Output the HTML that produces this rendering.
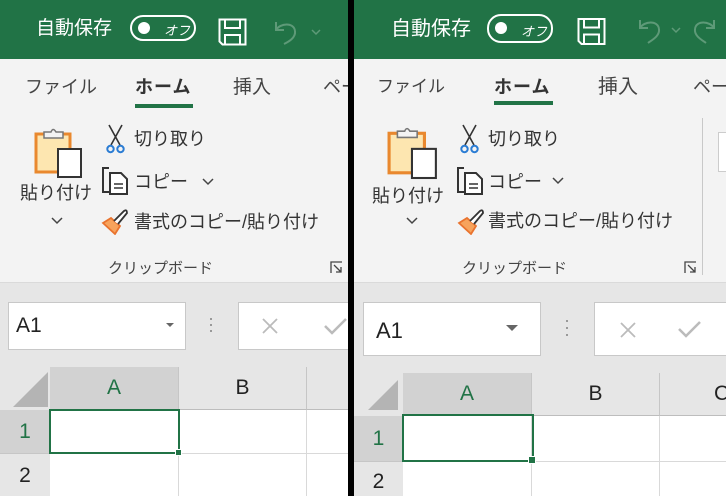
<!DOCTYPE html>
<html><head><meta charset="utf-8">
<style>
*{margin:0;padding:0;box-sizing:border-box}
body{width:726px;height:496px;overflow:hidden;background:#000;position:relative;font-family:"Liberation Sans","Noto Sans CJK JP",sans-serif}
.p{position:absolute;top:0;height:496px;overflow:hidden;background:#e6e6e6}
.a{position:absolute;white-space:nowrap}
.hdr{position:absolute;left:0;right:0;top:0;height:59px;background:#217346}
.rib{position:absolute;left:0;right:0;top:59px;height:224px;background:#f3f3f3;border-bottom:1px solid #dadada}
.t{color:#fff;font-size:19px;line-height:1}
.tab{color:#444;font-size:18px;line-height:1}
.cmd{color:#333;font-size:18px;line-height:1}
.box{position:absolute;background:#fff;border:1px solid #c8c8c8}
.colh{position:absolute;background:#e6e6e6;border-right:1px solid #c6c6c6;border-bottom:1px solid #bdbdbd;font-size:21px;color:#222;text-align:center}
.cell{position:absolute;background:#fff;border-right:1px solid #d9d9d9;border-bottom:1px solid #d9d9d9}
.rowh{position:absolute;background:#e6e6e6;border-bottom:1px solid #c6c6c6;font-size:21px;color:#222;text-align:center}
</style></head><body>

<!-- LEFT PANEL -->
<div class="p" style="left:0;width:348px">
 <div class="hdr"></div>
 <div class="a t" style="left:36px;top:19px">自動保存</div>
 <div class="a" style="left:130px;top:15px;width:66px;height:26px;border:2px solid #fff;border-radius:13px"></div>
 <div class="a" style="left:138px;top:22px;width:12px;height:12px;border-radius:50%;background:#fff"></div>
 <div class="a" style="left:164px;top:20px;color:#fff;font-size:13px;font-style:italic">オフ</div>
 <svg class="a" style="left:218px;top:18px" width="29" height="28" viewBox="0 0 29 28"><path d="M1.5 1.5H27.5V26.5H4.5L1.5 23.5Z M7 1.5V10H22V1.5 M7 26.5V17H22V26.5" fill="none" stroke="#fff" stroke-width="2"/></svg>
 <svg class="a" style="left:270px;top:18px" width="60" height="28" viewBox="0 0 60 28"><path d="M6 4V12H14 M6 12C10 5 24 4 25 13C26 20 18 24 14 26" fill="none" stroke="#5e9a78" stroke-width="2"/><path d="M42 12l4 4 4-4" fill="none" stroke="#5e9a78" stroke-width="1.5"/></svg>
 <div class="rib"></div>
 <div class="a tab" style="left:25px;top:78px">ファイル</div>
 <div class="a tab" style="left:135px;top:78px;font-weight:bold;color:#333;letter-spacing:1px">ホーム</div>
 <div class="a" style="left:135px;top:104px;width:58px;height:4px;background:#217346"></div>
 <div class="a tab" style="left:233px;top:78px;font-size:19px">挿入</div>
 <div class="a tab" style="left:323px;top:78px">ペー</div>
 <svg class="a" style="left:34px;top:126px" width="50" height="52" viewBox="0 0 50 52"><rect x="2" y="8" width="34" height="38" fill="#fde6b0" stroke="#e9882e" stroke-width="3"/><path d="M10 12V6H17Q19 1 22 6H29V12Z" fill="#f3f3f3" stroke="#777" stroke-width="1.5"/><rect x="24" y="23" width="23" height="28" fill="#fff" stroke="#333" stroke-width="2"/></svg>
 <div class="a cmd" style="left:20px;top:184px">貼り付け</div>
 <svg class="a" style="left:51px;top:217px" width="12" height="8"><path d="M1 1l5 5 5-5" fill="none" stroke="#444" stroke-width="1.5"/></svg>
 <svg class="a" style="left:106px;top:124px" width="19" height="30" viewBox="0 0 19 30"><path d="M3 1L14 21M16 1L5 21" stroke="#333" stroke-width="1.6"/><circle cx="4.5" cy="25" r="3.2" fill="none" stroke="#2b7cd3" stroke-width="2"/><circle cx="14.5" cy="25" r="3.2" fill="none" stroke="#2b7cd3" stroke-width="2"/></svg>
 <div class="a cmd" style="left:134px;top:130px">切り取り</div>
 <svg class="a" style="left:101px;top:166px" width="28" height="30" viewBox="0 0 28 30"><path d="M8 2H2V26H9" fill="none" stroke="#333" stroke-width="2"/><path d="M9 7H20L26 13V28H9Z" fill="#fff" stroke="#333" stroke-width="2"/><path d="M13 18H22M13 22H22" stroke="#333" stroke-width="1.5"/></svg>
 <div class="a cmd" style="left:134px;top:173px">コピー</div>
 <svg class="a" style="left:202px;top:178px" width="12" height="8"><path d="M1 1l5 5 5-5" fill="none" stroke="#444" stroke-width="1.5"/></svg>
 <svg class="a" style="left:101px;top:208px" width="28" height="27" viewBox="0 0 28 27"><path d="M2 15L14 26L19 18L10 10Z" fill="#f7a35c" stroke="#e9732e" stroke-width="1.8"/><path d="M13 13L23 3Q26 1 26 5L17 16" fill="#fff" stroke="#333" stroke-width="1.8"/></svg>
 <div class="a cmd" style="left:134px;top:213px">書式のコピー/貼り付け</div>
 <div class="a" style="left:108px;top:257px;font-size:15px;color:#444">クリップボード</div>
 <svg class="a" style="left:330px;top:261px" width="13" height="13"><path d="M1 12V1H12M4 4L11 11M6 11H11V6" fill="none" stroke="#444" stroke-width="1.3"/></svg>
 <div class="box" style="left:8px;top:302px;width:178px;height:48px"></div>
 <div class="a" style="left:16px;top:314px;font-size:21px;color:#222">A1</div>
 <svg class="a" style="left:166px;top:323px" width="8" height="5"><path d="M0 0H8L4 4Z" fill="#666"/></svg>
 <div class="a" style="left:210px;top:318px;width:2px;height:2px;background:#999;box-shadow:0 6px #999,0 12px #999"></div>
 <div class="box" style="left:238px;top:302px;width:120px;height:48px"></div>
 <svg class="a" style="left:261px;top:317px" width="18" height="18"><path d="M2 2L16 16M16 2L2 16" stroke="#bbb" stroke-width="1.8"/></svg>
 <svg class="a" style="left:323px;top:317px" width="25" height="18"><path d="M2 9L9 16L23 2" fill="none" stroke="#bbb" stroke-width="2.5"/></svg>
 <svg class="a" style="left:13px;top:372px" width="35" height="35"><path d="M35 0V35H0Z" fill="#b4b4b4"/></svg>
 <div class="colh" style="left:50px;top:367px;width:129px;height:43px;line-height:42px;background:#d2d2d2;color:#217346">A</div>
 <div class="colh" style="left:179px;top:367px;width:128px;height:43px;line-height:42px">B</div>
 <div class="colh" style="left:307px;top:367px;width:60px;height:43px"></div>
 <div class="rowh" style="left:0;top:410px;width:50px;height:44px;line-height:44px;background:#d2d2d2;color:#217346">1</div>
 <div class="rowh" style="left:0;top:454px;width:50px;height:44px;line-height:44px">2</div>
 <div class="cell" style="left:50px;top:410px;width:129px;height:44px"></div>
 <div class="cell" style="left:179px;top:410px;width:128px;height:44px"></div>
 <div class="cell" style="left:307px;top:410px;width:60px;height:44px"></div>
 <div class="cell" style="left:50px;top:454px;width:129px;height:44px"></div>
 <div class="cell" style="left:179px;top:454px;width:128px;height:44px"></div>
 <div class="cell" style="left:307px;top:454px;width:60px;height:44px"></div>
 <div class="a" style="left:49px;top:409px;width:131px;height:45px;border:2px solid #217346"></div>
 <div class="a" style="left:175px;top:449px;width:7px;height:7px;background:#217346;border:1px solid #fff"></div>
</div>

<!-- RIGHT PANEL -->
<div class="p" style="left:354px;width:372px">
 <div class="hdr"></div>
 <div class="a t" style="left:37px;top:19px;font-size:20px">自動保存</div>
 <div class="a" style="left:133px;top:14px;width:66px;height:29px;border:2px solid #fff;border-radius:14px"></div>
 <div class="a" style="left:141px;top:22px;width:12px;height:12px;border-radius:50%;background:#fff"></div>
 <div class="a" style="left:167px;top:21px;color:#fff;font-size:13px;font-style:italic">オフ</div>
 <svg class="a" style="left:223px;top:17px" width="29" height="29" viewBox="0 0 29 28"><path d="M1.5 1.5H27.5V26.5H4.5L1.5 23.5Z M7 1.5V10H22V1.5 M7 26.5V17H22V26.5" fill="none" stroke="#fff" stroke-width="2"/></svg>
 <svg class="a" style="left:280px;top:16px" width="92" height="32" viewBox="0 0 92 32"><path d="M6 4V12H14 M6 12C10 5 24 4 25 13C26 20 18 24 14 27" fill="none" stroke="#5e9a78" stroke-width="2"/><path d="M38 12l4 4 4-4" fill="none" stroke="#5e9a78" stroke-width="1.5"/><path d="M80 4V12H72 M80 12C76 5 62 4 61 13C60 20 68 24 72 27" fill="none" stroke="#5e9a78" stroke-width="2"/></svg>
 <div class="rib"></div>
 <div class="a tab" style="left:23px;top:78px;font-size:17px">ファイル</div>
 <div class="a tab" style="left:140px;top:78px;font-weight:bold;color:#333;letter-spacing:1px">ホーム</div>
 <div class="a" style="left:140px;top:101px;width:59px;height:4px;background:#217346"></div>
 <div class="a tab" style="left:244px;top:77px;font-size:20px">挿入</div>
 <div class="a tab" style="left:339px;top:78px">ペー</div>
 <div class="a" style="left:348px;top:118px;width:1px;height:157px;background:#c8c8c8"></div>
 <div class="a" style="left:364px;top:132px;width:10px;height:40px;background:#fff;border:1px solid #ccc"></div>
 <svg class="a" style="left:33px;top:124px" width="52" height="56" viewBox="0 0 50 52"><rect x="2" y="8" width="34" height="38" fill="#fde6b0" stroke="#e9882e" stroke-width="3"/><path d="M10 12V6H17Q19 1 22 6H29V12Z" fill="#f3f3f3" stroke="#777" stroke-width="1.5"/><rect x="24" y="23" width="23" height="28" fill="#fff" stroke="#333" stroke-width="2"/></svg>
 <div class="a cmd" style="left:18px;top:187px">貼り付け</div>
 <svg class="a" style="left:52px;top:217px" width="12" height="8"><path d="M1 1l5 5 5-5" fill="none" stroke="#444" stroke-width="1.5"/></svg>
 <svg class="a" style="left:106px;top:124px" width="19" height="30" viewBox="0 0 19 30"><path d="M3 1L14 21M16 1L5 21" stroke="#333" stroke-width="1.6"/><circle cx="4.5" cy="25" r="3.2" fill="none" stroke="#2b7cd3" stroke-width="2"/><circle cx="14.5" cy="25" r="3.2" fill="none" stroke="#2b7cd3" stroke-width="2"/></svg>
 <div class="a cmd" style="left:134px;top:130px">切り取り</div>
 <svg class="a" style="left:101px;top:166px" width="30" height="30" viewBox="0 0 28 30"><path d="M8 2H2V26H9" fill="none" stroke="#333" stroke-width="2"/><path d="M9 7H20L26 13V28H9Z" fill="#fff" stroke="#333" stroke-width="2"/><path d="M13 18H22M13 22H22" stroke="#333" stroke-width="1.5"/></svg>
 <div class="a cmd" style="left:134px;top:173px">コピー</div>
 <svg class="a" style="left:198px;top:177px" width="12" height="8"><path d="M1 1l5 5 5-5" fill="none" stroke="#444" stroke-width="1.5"/></svg>
 <svg class="a" style="left:101px;top:208px" width="32" height="27" viewBox="0 0 28 27"><path d="M2 15L14 26L19 18L10 10Z" fill="#f7a35c" stroke="#e9732e" stroke-width="1.8"/><path d="M13 13L23 3Q26 1 26 5L17 16" fill="#fff" stroke="#333" stroke-width="1.8"/></svg>
 <div class="a cmd" style="left:134px;top:212px">書式のコピー/貼り付け</div>
 <div class="a" style="left:108px;top:257px;font-size:15px;color:#444">クリップボード</div>
 <svg class="a" style="left:330px;top:261px" width="13" height="13"><path d="M1 12V1H12M4 4L11 11M6 11H11V6" fill="none" stroke="#444" stroke-width="1.3"/></svg>
 <div class="box" style="left:9px;top:302px;width:178px;height:54px"></div>
 <div class="a" style="left:22px;top:318px;font-size:22px;color:#222">A1</div>
 <svg class="a" style="left:152px;top:325px" width="12" height="6"><path d="M0 0H12L6 6Z" fill="#666"/></svg>
 <div class="a" style="left:212px;top:320px;width:2px;height:2px;background:#999;box-shadow:0 7px #999,0 14px #999"></div>
 <div class="box" style="left:240px;top:302px;width:140px;height:54px"></div>
 <svg class="a" style="left:265px;top:321px" width="18" height="18"><path d="M2 2L16 16M16 2L2 16" stroke="#bbb" stroke-width="1.8"/></svg>
 <svg class="a" style="left:323px;top:320px" width="25" height="18"><path d="M2 9L9 16L23 2" fill="none" stroke="#bbb" stroke-width="2.5"/></svg>
 <svg class="a" style="left:14px;top:380px" width="30" height="30"><path d="M30 0V30H0Z" fill="#b4b4b4"/></svg>
 <div class="colh" style="left:49px;top:373px;width:129px;height:43px;line-height:42px;background:#d2d2d2;color:#217346">A</div>
 <div class="colh" style="left:178px;top:373px;width:128px;height:43px;line-height:42px">B</div>
 <div class="colh" style="left:306px;top:373px;width:80px;height:43px;line-height:42px;text-align:left;padding-left:54px">C</div>
 <div class="rowh" style="left:0;top:416px;width:49px;height:46px;line-height:46px;background:#d2d2d2;color:#217346">1</div>
 <div class="rowh" style="left:0;top:462px;width:49px;height:44px;line-height:40px">2</div>
 <div class="cell" style="left:49px;top:416px;width:129px;height:46px"></div>
 <div class="cell" style="left:178px;top:416px;width:128px;height:46px"></div>
 <div class="cell" style="left:306px;top:416px;width:80px;height:46px"></div>
 <div class="cell" style="left:49px;top:462px;width:129px;height:44px"></div>
 <div class="cell" style="left:178px;top:462px;width:128px;height:44px"></div>
 <div class="cell" style="left:306px;top:462px;width:80px;height:44px"></div>
 <div class="a" style="left:48px;top:414px;width:132px;height:48px;border:2px solid #217346"></div>
 <div class="a" style="left:174px;top:456px;width:8px;height:8px;background:#217346;border:1px solid #fff"></div>
</div>
</body></html>
